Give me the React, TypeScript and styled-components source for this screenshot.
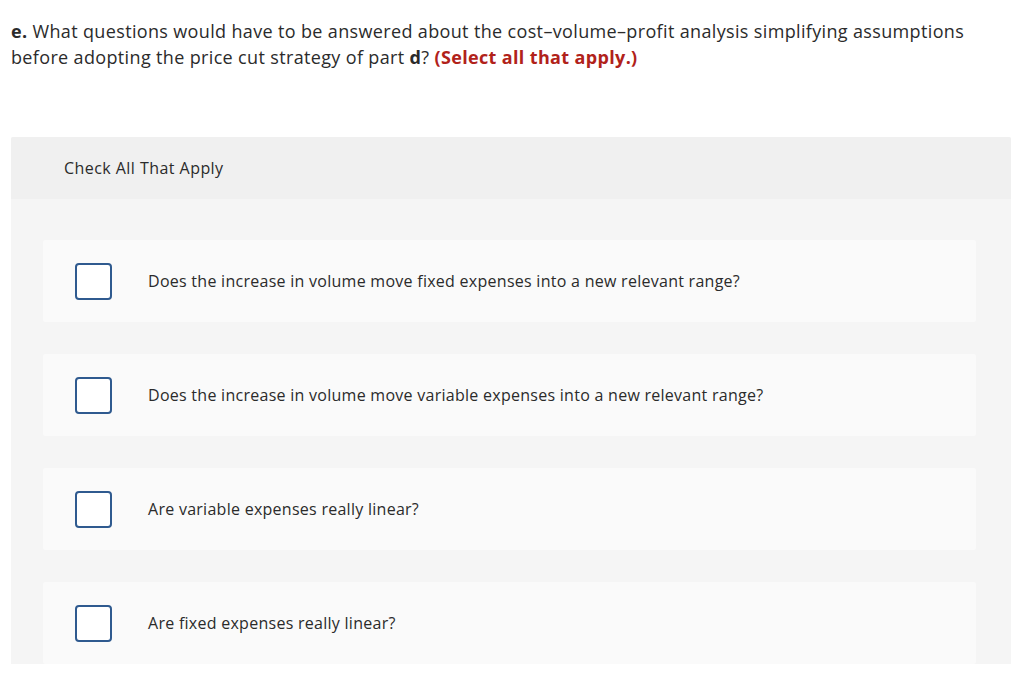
import React from "react";
import styled, { createGlobalStyle } from "styled-components";

const Global = createGlobalStyle`
  html, body { margin: 0; padding: 0; background: #fff; }
  body { font-family: "Open Sans", Lato, sans-serif; color: #2b2b2b; font-variant-ligatures: none; }
  * { box-sizing: border-box; }
`;

const Page = styled.div`
  padding: 18px 0 0 11px;
  height: 678px;
  overflow: hidden;
`;

const Question = styled.p`
  margin: 0;
  font-size: 18px;
  line-height: 26px;
  letter-spacing: 0.35px;
  color: #2b2b2b;
  white-space: nowrap;
`;

const Bold = styled.b`
  font-weight: 700;
`;

const Red = styled.b`
  font-weight: 700;
  color: #b1221a;
`;

const Panel = styled.section`
  margin-top: 67px;
  width: 1000px;
  background: #f5f5f5;
  border-radius: 2px 2px 0 0;
  height: 527px;
  overflow: hidden;
`;

const Header = styled.div`
  height: 62px;
  background: #f0f0f0;
  display: flex;
  align-items: center;
  padding-left: 53px;
  font-size: 16px;
  letter-spacing: 0.45px;
  color: #2b2b2b;
`;

const List = styled.div`
  display: flex;
  flex-direction: column;
  gap: 32px;
  padding: 41px 35px 0 32px;
`;

const Item = styled.label`
  display: flex;
  align-items: center;
  height: 82px;
  background: #fafafa;
  border-radius: 2px;
  padding-left: 32px;
  font-size: 16px;
  letter-spacing: 0.27px;
  color: #2b2b2b;
  cursor: pointer;
`;

const Box = styled.span`
  width: 37px;
  height: 37px;
  border: 2.5px solid #2f5a8f;
  border-radius: 4px;
  background: #fff;
  flex: none;
  margin-right: 36px;
`;

const options = [
  "Does the increase in volume move fixed expenses into a new relevant range?",
  "Does the increase in volume move variable expenses into a new relevant range?",
  "Are variable expenses really linear?",
  "Are fixed expenses really linear?",
];

export default function App() {
  return (
    <>
      <Global />
      <Page>
        <Question>
          <Bold>e.</Bold> What questions would have to be answered about the cost–volume–profit analysis simplifying assumptions
          <br />
          before adopting the price cut strategy of part <Bold>d</Bold>? <Red>(Select all that apply.)</Red>
        </Question>
        <Panel>
          <Header>Check All That Apply</Header>
          <List>
            {options.map((o) => (
              <Item key={o}>
                <Box />
                {o}
              </Item>
            ))}
          </List>
        </Panel>
      </Page>
    </>
  );
}
